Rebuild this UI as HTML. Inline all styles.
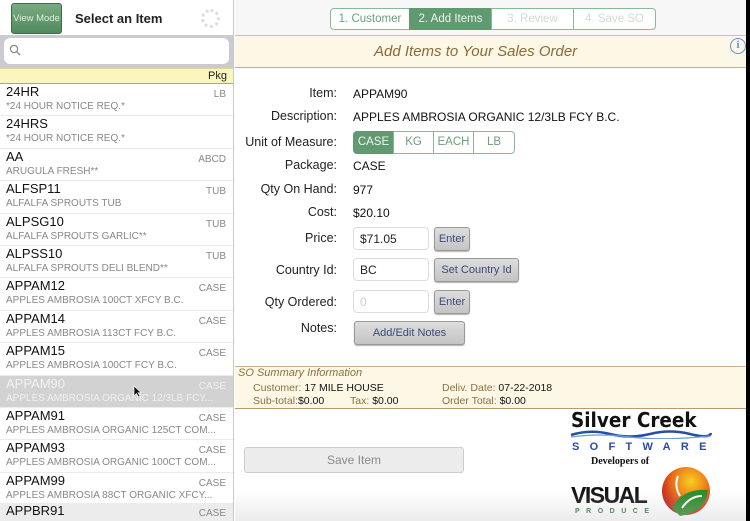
<!DOCTYPE html>
<html><head><meta charset="utf-8"><style>
*{box-sizing:border-box;margin:0;padding:0}
html,body{width:750px;height:521px;overflow:hidden}
body{background:#fff;font-family:"Liberation Sans",sans-serif;position:relative;color:#222}
.a{position:absolute}
.left{left:0;top:0;width:234px;height:521px;background:#fff;border-right:1px solid #c8c8c8;overflow:hidden}
.row{position:absolute;left:0;width:234px;height:32.4px;border-bottom:1px solid #ececec}
.row .c{position:absolute;left:6px;top:0px;font-size:13px;color:#111}
.row .d{position:absolute;left:6px;top:17px;font-size:10px;color:#888;white-space:nowrap}
.row .p{position:absolute;right:8px;top:5px;font-size:10px;color:#888}
.lbl{position:absolute;right:413px;font-size:12.5px;color:#222;text-align:right;white-space:nowrap}
.val{position:absolute;left:353px;font-size:12px;color:#111;white-space:nowrap}
.inp{position:absolute;left:353px;width:76px;height:23px;border:1px solid #ddd;border-radius:4px;font-size:12px;padding:4px 6px;background:#fff}
.btn{position:absolute;height:24px;border:1px solid #999;border-radius:3px;background:linear-gradient(#ddd,#c4c4c4);color:#3b4a78;font-size:11px;text-align:center;line-height:22px;box-shadow:0 1px 1px rgba(0,0,0,.3)}
.seg{position:absolute;height:22px;border:1px solid #8ab99a;font-size:11.5px;text-align:center;line-height:20px;color:#6a9e7c}
.s{font-size:10.5px;color:#8b7040}
.s b{font-weight:normal;color:#111}
</style></head><body>
<div class="a left">
 <div class="a" style="left:11px;top:3px;width:51px;height:31px;background:linear-gradient(#7bab84,#4f8a5c);border:1px solid #3e6e48;border-radius:3px;color:#dfeee2;font-size:9.5px;text-align:center;line-height:29px">View Mode</div>
 <div class="a" style="left:75px;top:11px;font-size:13px;font-weight:bold;color:#222">Select an Item</div>
 <div class="a" style="left:201px;top:9px;width:19px;height:19px;border-radius:50%;border:3px dotted #ddd"></div>
 <div class="a" style="left:0;top:35px;width:234px;height:33px;background:#cbcbcf"></div>
 <div class="a" style="left:4px;top:38px;width:225px;height:26px;background:#fff;border-radius:6px"></div>
 <svg class="a" style="left:9px;top:44px" width="12" height="12"><circle cx="5" cy="5" r="3.6" fill="none" stroke="#888" stroke-width="1.2"/><line x1="7.6" y1="7.6" x2="11" y2="11" stroke="#888" stroke-width="1.3"/></svg>
 <div class="a" style="left:0;top:68px;width:234px;height:16px;background:#fbf6bd;border-bottom:1px solid #b9a26a;border-top:1px solid #e0d7a0"><span class="a" style="right:7px;top:1px;font-size:11px;color:#222">Pkg</span></div>
 <div class="row" style="top:84px"><span class="c">24HR</span><span class="p">LB</span><span class="d">*24 HOUR NOTICE REQ.*</span></div>
 <div class="row" style="top:116.4px"><span class="c">24HRS</span><span class="d">*24 HOUR NOTICE REQ.*</span></div>
 <div class="row" style="top:148.8px"><span class="c">AA</span><span class="p">ABCD</span><span class="d">ARUGULA FRESH**</span></div>
 <div class="row" style="top:181.2px"><span class="c">ALFSP11</span><span class="p">TUB</span><span class="d">ALFALFA SPROUTS TUB</span></div>
 <div class="row" style="top:213.6px"><span class="c">ALPSG10</span><span class="p">TUB</span><span class="d">ALFALFA SPROUTS GARLIC**</span></div>
 <div class="row" style="top:246px"><span class="c">ALPSS10</span><span class="p">TUB</span><span class="d">ALFALFA SPROUTS DELI BLEND**</span></div>
 <div class="row" style="top:278.4px"><span class="c">APPAM12</span><span class="p">CASE</span><span class="d">APPLES AMBROSIA 100CT XFCY B.C.</span></div>
 <div class="row" style="top:310.8px"><span class="c">APPAM14</span><span class="p">CASE</span><span class="d">APPLES AMBROSIA 113CT FCY B.C.</span></div>
 <div class="row" style="top:343.2px"><span class="c">APPAM15</span><span class="p">CASE</span><span class="d">APPLES AMBROSIA 100CT FCY B.C.</span></div>
 <div class="row" style="top:375.6px;background:#d2d2d2"><span class="c" style="color:#f2f2f2">APPAM90</span><span class="p" style="color:#f0f0f0">CASE</span><span class="d" style="color:#f0f0f0">APPLES AMBROSIA ORGANIC 12/3LB FCY...</span></div>
 <div class="row" style="top:408px"><span class="c">APPAM91</span><span class="p">CASE</span><span class="d">APPLES AMBROSIA ORGANIC 125CT COM...</span></div>
 <div class="row" style="top:440.4px"><span class="c">APPAM93</span><span class="p">CASE</span><span class="d">APPLES AMBROSIA ORGANIC 100CT COM...</span></div>
 <div class="row" style="top:472.8px"><span class="c">APPAM99</span><span class="p">CASE</span><span class="d">APPLES AMBROSIA 88CT ORGANIC XFCY...</span></div>
 <div class="row" style="top:503px;background:#ececec"><span class="c">APPBR91</span><span class="p">CASE</span></div>
 <svg class="a" style="left:133px;top:385px" width="9" height="13"><path d="M1 1 L1 11 L3.5 8.5 L5.5 12 L7 11 L5 7.8 L8 7.5 Z" fill="#111" stroke="#fff" stroke-width=".6"/></svg>
</div>
<div class="a" style="left:235px;top:0;width:511px;height:35px;background:#f7f7f7"></div>
<div class="seg" style="left:330px;top:8px;width:80px;border-radius:4px 0 0 4px;background:#fff">1. Customer</div>
<div class="seg" style="left:409px;top:8px;width:83px;background:#5f9a71;color:#eef5ef;border-color:#5f9a71">2. Add Items</div>
<div class="seg" style="left:491px;top:8px;width:83px;background:#fff;color:#cfdcd3">3. Review</div>
<div class="seg" style="left:573px;top:8px;width:83px;border-radius:0 4px 4px 0;background:#fff;color:#cfdcd3">4. Save SO</div>
<div class="a" style="left:235px;top:35px;width:511px;height:33px;background:#fdf8e6;border-top:1px solid #d4bfa0;border-bottom:1px solid #c9b08a"></div>
<div class="a" style="left:374px;top:43px;font-size:15px;font-style:italic;color:#8b6a3a">Add Items to Your Sales Order</div>
<div class="a" style="left:730px;top:38px;width:16px;height:16px;border:1.5px solid #5a93e0;border-radius:50%;color:#5a93e0;font-size:11px;font-weight:bold;text-align:center;line-height:13px;font-family:'Liberation Serif',serif">i</div>

<div class="lbl" style="top:86px">Item:</div><div class="val" style="top:87px">APPAM90</div>
<div class="lbl" style="top:109px">Description:</div><div class="val" style="top:110px">APPLES AMBROSIA ORGANIC 12/3LB FCY B.C.</div>
<div class="lbl" style="top:135px">Unit of Measure:</div>
<div class="seg" style="left:353px;top:131px;width:41px;background:#5f9a71;color:#eef5ef;border-color:#5f9a71;border-radius:4px 0 0 4px;height:23px;line-height:21px">CASE</div>
<div class="seg" style="left:393px;top:131px;width:41px;background:#fff;height:23px;line-height:21px">KG</div>
<div class="seg" style="left:433px;top:131px;width:41px;background:#fff;height:23px;line-height:21px">EACH</div>
<div class="seg" style="left:473px;top:131px;width:42px;background:#fff;height:23px;line-height:21px;border-radius:0 4px 4px 0">LB</div>
<div class="lbl" style="top:158px">Package:</div><div class="val" style="top:159px">CASE</div>
<div class="lbl" style="top:182px">Qty On Hand:</div><div class="val" style="top:183px">977</div>
<div class="lbl" style="top:205px">Cost:</div><div class="val" style="top:206px">$20.10</div>
<div class="lbl" style="top:231px">Price:</div><div class="inp" style="top:227px">$71.05</div><div class="btn" style="left:434px;top:227px;width:36px">Enter</div>
<div class="lbl" style="top:263px">Country Id:</div><div class="inp" style="top:258px">BC</div><div class="btn" style="left:434px;top:258px;width:85px">Set Country Id</div>
<div class="lbl" style="top:295px">Qty Ordered:</div><div class="inp" style="top:290px;color:#ccc">0</div><div class="btn" style="left:434px;top:290px;width:36px">Enter</div>
<div class="lbl" style="top:321px">Notes:</div><div class="btn" style="left:354px;top:321px;width:111px">Add/Edit Notes</div>

<div class="a" style="left:235px;top:366px;width:511px;height:43px;background:#fdf8e6;border-top:1px solid #c9b08a;border-bottom:1px solid #b99a70"></div>
<div class="a" style="left:238px;top:367px;font-size:11px;font-style:italic;color:#8b7040">SO Summary Information</div>
<div class="a s" style="left:253px;top:382px">Customer: <b>17 MILE HOUSE</b></div>
<div class="a s" style="left:442px;top:382px">Deliv. Date: <b>07-22-2018</b></div>
<div class="a s" style="left:253px;top:395px">Sub-total:<b>$0.00</b></div>
<div class="a s" style="left:350px;top:395px">Tax: <b>$0.00</b></div>
<div class="a s" style="left:442px;top:395px">Order Total: <b>$0.00</b></div>

<div class="a" style="left:244px;top:447px;width:220px;height:26px;border:1px solid #ccc;border-radius:3px;background:#ececec;color:#8a8a8a;font-size:12px;text-align:center;line-height:24px">Save Item</div>

<div class="a" style="left:571px;top:408px;font-size:20px;font-weight:bold;color:#111;white-space:nowrap;font-family:'DejaVu Sans',sans-serif;transform:scaleX(.92);transform-origin:left">Silver Creek</div>
<svg class="a" style="left:570px;top:429px" width="142" height="10"><path d="M1 6 Q20 0 40 5 T80 5 T120 5 T141 4" stroke="#2a4da0" stroke-width="2.5" fill="none"/><path d="M1 8 Q30 4 60 8 T141 7" stroke="#6a9de0" stroke-width="1.3" fill="none"/></svg>
<div class="a" style="left:572px;top:441px;font-size:11px;color:#2a4da0;font-weight:bold;letter-spacing:10.3px;white-space:nowrap">SOFTWARE</div>
<div class="a" style="left:591px;top:456px;font-size:10px;font-weight:bold;color:#111;font-family:'Liberation Serif',serif">Developers of</div>
<div class="a" style="left:571px;top:482px;font-size:23px;font-weight:bold;color:#111;letter-spacing:-1.5px">VISUAL</div>
<div class="a" style="left:575px;top:508px;font-size:7px;color:#2a7a3a;font-weight:bold;letter-spacing:6.5px;white-space:nowrap">PRODUCE</div>
<svg class="a" style="left:660px;top:466px" width="52" height="55">
<defs><radialGradient id="g" cx="60%" cy="30%" r="70%"><stop offset="0" stop-color="#f6d020"/><stop offset=".5" stop-color="#ee7a1a"/><stop offset="1" stop-color="#c2181a"/></radialGradient></defs>
<circle cx="26" cy="25" r="24" fill="url(#g)"/>
<path d="M12 42 Q22 22 48 24 Q46 46 20 50 Z" fill="#2d8a2a"/>
<path d="M22 42 Q30 30 42 30" stroke="#fff" stroke-width="2" fill="none"/>
<path d="M18 10 Q14 20 20 30" stroke="#fff" stroke-width="2" fill="none"/>
</svg>
<div class="a" style="left:746px;top:0;width:4px;height:521px;background:#000"></div>
<div class="a" style="left:235px;top:490px;width:511px;height:31px;background:linear-gradient(rgba(255,255,255,0),rgba(200,200,200,.35))"></div>
</body></html>
